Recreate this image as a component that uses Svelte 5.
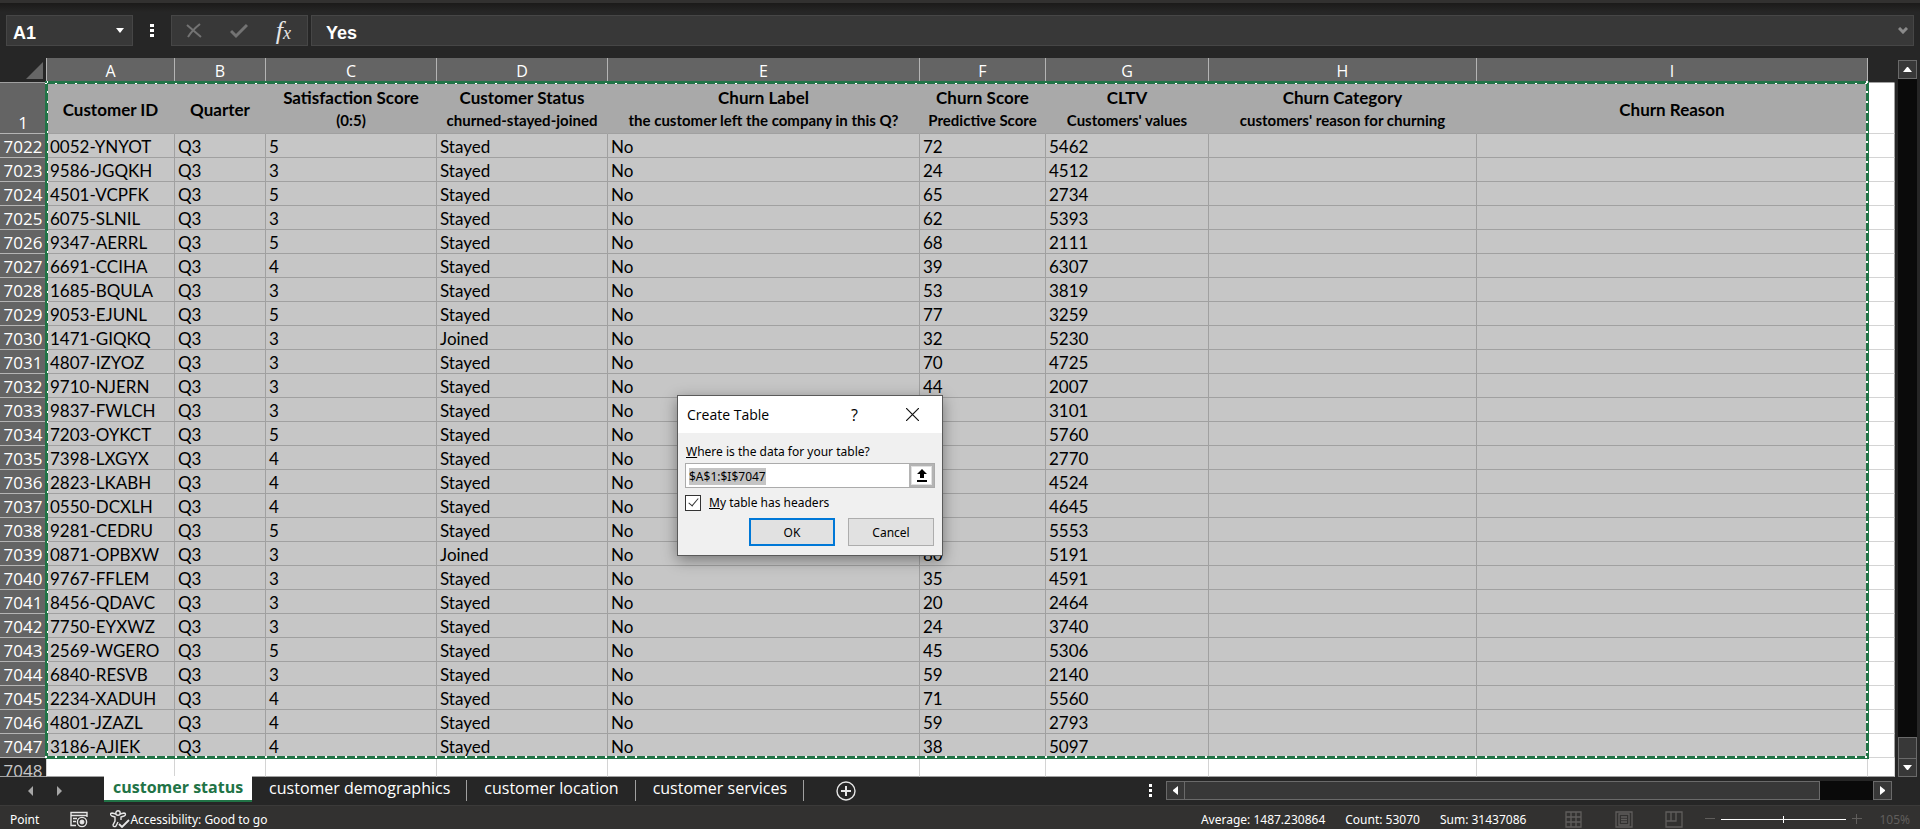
<script>
  import { onMount } from 'svelte';

  let range = '$A$1:$I$7047';
  let hasHeaders = true;
  let zoom = 50;
  let rangeInput;

  const columns = [
    { letter: 'A', title: 'Customer ID' },
    { letter: 'B', title: 'Quarter' },
    { letter: 'C', title: 'Satisfaction Score', note: '(0:5)' },
    { letter: 'D', title: 'Customer Status', note: 'churned-stayed-joined' },
    { letter: 'E', title: 'Churn Label', note: 'the customer left the company in this Q?' },
    { letter: 'F', title: 'Churn Score', note: 'Predictive Score' },
    { letter: 'G', title: 'CLTV', note: "Customers' values" },
    { letter: 'H', title: 'Churn Category', note: "customers' reason for churning" },
    { letter: 'I', title: 'Churn Reason' }
  ];

  const firstRow = 7022;

  // id, satisfaction, status, churn score, cltv
  const customers = [
    ['0052-YNYOT', 5, 'Stayed', 72, 5462],
    ['9586-JGQKH', 3, 'Stayed', 24, 4512],
    ['4501-VCPFK', 5, 'Stayed', 65, 2734],
    ['6075-SLNIL', 3, 'Stayed', 62, 5393],
    ['9347-AERRL', 5, 'Stayed', 68, 2111],
    ['6691-CCIHA', 4, 'Stayed', 39, 6307],
    ['1685-BQULA', 3, 'Stayed', 53, 3819],
    ['9053-EJUNL', 5, 'Stayed', 77, 3259],
    ['1471-GIQKQ', 3, 'Joined', 32, 5230],
    ['4807-IZYOZ', 3, 'Stayed', 70, 4725],
    ['9710-NJERN', 3, 'Stayed', 44, 2007],
    ['9837-FWLCH', 3, 'Stayed', '', 3101],
    ['7203-OYKCT', 5, 'Stayed', '', 5760],
    ['7398-LXGYX', 4, 'Stayed', '', 2770],
    ['2823-LKABH', 4, 'Stayed', '', 4524],
    ['0550-DCXLH', 4, 'Stayed', '', 4645],
    ['9281-CEDRU', 5, 'Stayed', '', 5553],
    ['0871-OPBXW', 3, 'Joined', 80, 5191],
    ['9767-FFLEM', 3, 'Stayed', 35, 4591],
    ['8456-QDAVC', 3, 'Stayed', 20, 2464],
    ['7750-EYXWZ', 3, 'Stayed', 24, 3740],
    ['2569-WGERO', 5, 'Stayed', 45, 5306],
    ['6840-RESVB', 3, 'Stayed', 59, 2140],
    ['2234-XADUH', 4, 'Stayed', 71, 5560],
    ['4801-JZAZL', 4, 'Stayed', 59, 2793],
    ['3186-AJIEK', 4, 'Stayed', 38, 5097]
  ];

  const sheets = ['customer status', 'customer demographics', 'customer location', 'customer services'];
  let activeSheet = sheets[0];

  onMount(() => {
    rangeInput.focus();
    rangeInput.select();
  });
</script>

<div class="excel">
  <div class="ribbon-edge"></div>

  <div class="formula-bar">
    <div class="name-box box">
      <input class="cell-name" aria-label="Name box" value="A1" />
      <button class="plain" aria-label="Open name list">
        <svg width="8" height="5" viewBox="0 0 8 5"><path d="M0 0h8L4 5z" fill="#fff" /></svg>
      </button>
    </div>
    <svg class="grip" width="4" height="14" viewBox="0 0 4 14" fill="#fff">
      <path d="M0 0h4v3H0zM0 5h4v3H0zM0 10h4v3H0z" />
    </svg>
    <div class="tools box">
      <button class="plain" aria-label="Cancel entry">
        <svg width="16" height="16" viewBox="0 0 16 16" fill="none" stroke="#737373" stroke-width="2">
          <path d="M1 2l14 12M14 1C9 5 5 9 2 14" />
        </svg>
      </button>
      <button class="plain" aria-label="Enter">
        <svg width="18" height="16" viewBox="0 0 18 16" fill="none" stroke="#737373" stroke-width="3">
          <path d="M1 8l5 5L17 2" />
        </svg>
      </button>
      <button class="plain fx" aria-label="Insert function"><i>f</i><i class="sub">x</i></button>
    </div>
    <div class="formula box">
      <input class="formula-input" aria-label="Formula bar" value="Yes" />
      <button class="plain" aria-label="Expand formula bar">
        <svg width="10" height="7" viewBox="0 0 10 7" fill="none" stroke="#8a8a8a" stroke-width="3">
          <path d="M1 1l4 4 4-4" />
        </svg>
      </button>
    </div>
  </div>

  <div class="workspace">
    <div class="sheet">
      <table>
        <colgroup>
          <col class="w-num" /><col class="w-a" /><col class="w-b" /><col class="w-c" /><col class="w-d" />
          <col class="w-e" /><col class="w-f" /><col class="w-g" /><col class="w-h" /><col /><col class="w-rest" />
        </colgroup>
        <thead>
          <tr class="letters">
            <td class="corner">
              <svg width="17" height="17" viewBox="0 0 17 17"><path d="M17 0v17H0z" fill="#666" /></svg>
            </td>
            {#each columns as col}
              <th scope="col">{col.letter}</th>
            {/each}
            <td class="off"></td>
          </tr>
          <tr class="titles">
            <th class="num">1</th>
            {#each columns as col}
              <th scope="col">
                <span class="title">{col.title}</span>
                {#if col.note}<span class="note">{col.note}</span>{/if}
              </th>
            {/each}
            <td class="blank"></td>
          </tr>
        </thead>
        <tbody>
          {#each customers as [id, score, status, churn, cltv], i}
            <tr>
              <th class="num" scope="row">{firstRow + i}</th>
              <td>{id}</td>
              <td>Q3</td>
              <td>{score}</td>
              <td>{status}</td>
              <td>No</td>
              <td>{churn}</td>
              <td>{cltv}</td>
              <td></td>
              <td></td>
              <td class="blank"></td>
            </tr>
          {/each}
          <tr class="last">
            <th class="num" scope="row"><div>7048</div></th>
            {#each columns as col}
              <td></td>
            {/each}
            <td class="blank"></td>
          </tr>
        </tbody>
      </table>
      <div class="marquee"></div>
    </div>

    <div class="vscroll">
      <button class="scroll-btn" aria-label="Scroll up">
        <svg width="9" height="5" viewBox="0 0 9 5"><path d="M0 5h9L5 0H4z" fill="#fff" /></svg>
      </button>
      <div class="track"></div>
      <div class="thumb"></div>
      <button class="scroll-btn" aria-label="Scroll down">
        <svg width="9" height="5" viewBox="0 0 9 5"><path d="M0 0h9L5 5H4z" fill="#fff" /></svg>
      </button>
    </div>
  </div>

  <div class="tab-bar">
    <div class="tab-nav">
      <button class="plain" aria-label="Previous sheet">
        <svg width="5" height="10" viewBox="0 0 5 10"><path d="M5 0v10L0 5z" fill="#a6a6a6" /></svg>
      </button>
      <button class="plain" aria-label="Next sheet">
        <svg width="5" height="10" viewBox="0 0 5 10"><path d="M0 0v10l5-5z" fill="#a6a6a6" /></svg>
      </button>
    </div>
    <div class="tabs">
      {#each sheets as sheet}
        <button class="tab" class:active={sheet === activeSheet} on:click={() => (activeSheet = sheet)}>{sheet}</button>
      {/each}
    </div>
    <button class="plain add" aria-label="New sheet">
      <svg width="20" height="20" viewBox="0 0 20 20" fill="none" stroke="#e6e6e6">
        <circle cx="10" cy="10" r="9" stroke-width="1.4" />
        <path d="M10 5v10M5 10h10" stroke-width="2" />
      </svg>
    </button>
    <svg class="tab-grip" width="3" height="13" viewBox="0 0 3 13" fill="#fff">
      <path d="M0 0h3v3H0zM0 5h3v3H0zM0 10h3v3H0z" />
    </svg>
    <div class="hscroll">
      <button class="scroll-btn" aria-label="Scroll left">
        <svg width="5" height="9" viewBox="0 0 5 9"><path d="M5 0v9L0 5V4z" fill="#fff" /></svg>
      </button>
      <div class="thumb"></div>
      <div class="track"></div>
      <button class="scroll-btn" aria-label="Scroll right">
        <svg width="5" height="9" viewBox="0 0 5 9"><path d="M0 0v9l5-4V4z" fill="#fff" /></svg>
      </button>
    </div>
  </div>

  <footer class="status">
    <span class="mode">Point</span>
    <button class="plain macro" aria-label="Record macro">
      <svg width="18" height="17" viewBox="0 0 18 17" fill="none" stroke="#e6e6e6">
        <path d="M6 14.5H1v-13h16V6M1 4.5h16M3 7.5h4M3 10.5h3" stroke-width="1.4" />
        <circle cx="12" cy="11" r="4.6" stroke-width="1.4" />
        <circle cx="12" cy="11" r="2" fill="#e6e6e6" />
      </svg>
    </button>
    <button class="plain access">
      <svg width="20" height="18" viewBox="0 0 20 18" fill="none" stroke="#e6e6e6" stroke-width="1.4">
        <circle cx="8" cy="3" r="2.2" />
        <path d="M6 4L2 3C0 3 0 5 2 6l3 1v4l-2 4c0 2 2 2 3 1l2-4M10 4l4-1c2 0 2 2 0 3l-3 1v3" />
        <path d="M9 14l3 3 7-7" stroke-width="1.8" />
      </svg>
      Accessibility: Good to go
    </button>
    <div class="sums">
      <span>Average: 1487.230864</span>
      <span>Count: 53070</span>
      <span>Sum: 31437086</span>
    </div>
    <div class="views">
      <button class="plain" aria-label="Normal view">
        <svg width="18" height="17" viewBox="0 0 18 17" fill="none" stroke="#605e5c" stroke-width="1.3">
          <path d="M1 1h15v15H1zM1 6h15M1 11h15M6 1v15M11 1v15" />
        </svg>
      </button>
      <button class="plain" aria-label="Page layout">
        <svg width="18" height="17" viewBox="0 0 18 17" fill="none" stroke="#605e5c" stroke-width="1.3">
          <path d="M1 1h16v15H1zM4 3h10v11H4zM6 6h6M6 8.500h6M6 11h6" />
        </svg>
      </button>
      <button class="plain" aria-label="Page break preview">
        <svg width="18" height="17" viewBox="0 0 18 17" fill="none" stroke="#605e5c" stroke-width="1.3">
          <path d="M1 1h16v15H1zM1 10h10V1M6 1v9" />
        </svg>
      </button>
    </div>
    <div class="zoom">
      <button class="plain" aria-label="Zoom out">
        <svg width="10" height="10" viewBox="0 0 10 10" stroke="#605e5c"><path d="M0 4.5h10" /></svg>
      </button>
      <input type="range" aria-label="Zoom" bind:value={zoom} />
      <button class="plain" aria-label="Zoom in">
        <svg width="10" height="10" viewBox="0 0 10 10" stroke="#605e5c"><path d="M0 4.5h10M4.500 0v10" /></svg>
      </button>
    </div>
    <span class="percent">105%</span>
  </footer>

  <div class="dialog" role="dialog" aria-labelledby="dialog-title">
    <div class="dialog-head">
      <span id="dialog-title">Create Table</span>
      <button class="plain help" aria-label="Help">?</button>
      <button class="plain close" aria-label="Close">
        <svg width="13" height="13" viewBox="0 0 13 13" stroke="#111" stroke-width="1.2"><path d="M0 0l13 13M13 0L0 13" /></svg>
      </button>
    </div>
    <div class="dialog-body">
      <label for="range"><u>W</u>here is the data for your table?</label>
      <div class="range">
        <input id="range" bind:this={rangeInput} bind:value={range} />
        <button aria-label="Collapse dialog">
          <svg width="10" height="13" viewBox="0 0 10 13"><path d="M5 0l5 5H7v4H3V5H0zM0 11h10v2H0z" /></svg>
        </button>
      </div>
      <label class="check">
        <input type="checkbox" bind:checked={hasHeaders} />
        <span><u>M</u>y table has headers</span>
      </label>
      <div class="actions">
        <button class="ok">OK</button>
        <button>Cancel</button>
      </div>
    </div>
  </div>
</div>

<style>
  :global(body) {
    background: #262626;
  }

  .excel {
    position: relative;
    font-family: "Noto Sans", "Open Sans", sans-serif;
    font-size: 12px;
    color: #fff;
    background: #262626;
    overflow: hidden;
  }

  .excel :global(svg) {
    display: block;
    flex: none;
  }

  button,
  input {
    font: inherit;
    color: inherit;
    box-sizing: border-box;
    margin: 0;
    border-radius: 0;
  }

  .plain {
    display: flex;
    align-items: center;
    justify-content: center;
    padding: 0;
    border: 0;
    background: none;
  }

  .ribbon-edge {
    height: 12px;
    border-top: 3px solid #323130;
    box-sizing: border-box;
    background: linear-gradient(#1b1a19, #262626);
  }

  /* formula bar */
  .formula-bar {
    display: flex;
    align-items: center;
    padding: 3px 6px 12px;
  }

  .box {
    display: flex;
    align-items: center;
    box-sizing: border-box;
    height: 31px;
    border: 1px solid #464646;
    background: #383838;
  }

  .box input {
    flex: 1;
    min-width: 0;
    height: 28px;
    border: 0;
    padding: 5px 0 0;
    background: none;
    outline: none;
    font-family: "Liberation Sans Narrow", "Liberation Sans", sans-serif;
    font-size: 18px;
    font-weight: 700;
  }

  .name-box {
    width: 127px;
    padding: 0 8px 0 6px;
  }

  .grip {
    margin: 0 17px;
  }

  .tools {
    width: 137px;
    margin-right: 3px;
    padding: 0 16px 0 14px;
    justify-content: space-between;
  }

  .fx {
    font-family: "Liberation Serif", serif;
    font-size: 26px;
    line-height: 28px;
    color: #e6e6e6;
  }

  .fx .sub {
    font-size: 18px;
    padding-top: 4px;
  }

  .formula {
    flex: 1;
    padding: 0 5px 0 14px;
  }

  /* grid */
  .workspace {
    display: flex;
  }

  .sheet {
    position: relative;
    flex: 1;
  }

  table {
    width: 100%;
    table-layout: fixed;
    border-collapse: separate;
    border-spacing: 0;
    font-family: Lato, "Open Sans", sans-serif;
    font-size: 17px;
    line-height: 21px;
    color: #000;
  }

  .w-num { width: 47px; }
  .w-a { width: 128px; }
  .w-b { width: 91px; }
  .w-c, .w-d { width: 171px; }
  .w-e { width: 312px; }
  .w-f { width: 126px; }
  .w-g { width: 163px; }
  .w-h { width: 268px; }
  .w-rest { width: 27px; }

  th,
  td {
    box-sizing: border-box;
    height: 24px;
    padding: 2px 3px 0;
    border-right: 1px solid #a0a0a0;
    border-bottom: 1px solid #a0a0a0;
    background: #c6c6c6;
    text-align: left;
    white-space: nowrap;
  }

  .letters th,
  .letters td {
    border-right-color: #b4b4b4;
    background: #646464;
    color: #fff;
    font-family: "Open Sans", sans-serif;
    font-size: 16px;
    font-weight: 400;
    text-align: center;
  }

  .letters th {
    height: 25px;
  }

  .letters .corner {
    padding: 0 3px;
    background: #262626;
  }

  .corner svg {
    margin-left: auto;
  }

  .letters .off {
    border-right-color: #262626;
    background: #262626;
  }

  .titles th {
    height: 51px;
    border-right-color: #a9a9a9;
    background: #a9a9a9;
    font-weight: 700;
    line-height: 23px;
    text-align: center;
  }

  .title,
  .note {
    display: block;
  }

  .note {
    font-size: 15px;
  }

  .num,
  .titles .num {
    padding: 2px 0 0;
    border-right-color: #b4b4b4;
    border-bottom-color: #b4b4b4;
    background: #646464;
    color: #fff;
    font-family: "Open Sans", sans-serif;
    font-size: 17px;
    font-weight: 400;
    line-height: 21px;
    text-align: center;
  }

  .titles .num {
    vertical-align: bottom;
  }

  td.blank {
    background: #fff;
    border-bottom-color: #d4d4d4;
  }

  .last td,
  .last th {
    height: 19px;
    padding: 0;
    border-right-color: #d4d4d4;
    border-bottom-color: #a0a0a0;
    background: #fff;
  }

  .last th {
    background: #262626;
    color: #c8c8c8;
  }

  .last div {
    height: 18px;
    overflow: hidden;
    line-height: 25px;
  }

  /* dashed copy outline round the selected range */
  .marquee {
    position: absolute;
    top: 23px;
    right: 26px;
    bottom: 18px;
    left: 45px;
    pointer-events: none;
    background:
      repeating-linear-gradient(90deg, #fff 0 2px, transparent 2px 10px) 0 2px / 100% 1px no-repeat,
      repeating-linear-gradient(90deg, #fff 0 2px, transparent 2px 10px) 0 calc(100% - 1px) / 100% 2px no-repeat,
      repeating-linear-gradient(#fff 0 2px, transparent 2px 10px) 2px 0 / 1px 100% no-repeat,
      repeating-linear-gradient(#fff 0 2px, transparent 2px 10px) calc(100% - 1px) 0 / 2px 100% no-repeat,
      linear-gradient(#217346, #217346) 0 0 / 100% 3px no-repeat,
      linear-gradient(#217346, #217346) 0 100% / 100% 3px no-repeat,
      linear-gradient(#217346, #217346) 0 0 / 3px 100% no-repeat,
      linear-gradient(#217346, #217346) 100% 0 / 3px 100% no-repeat;
  }

  /* scroll bars */
  .vscroll {
    display: flex;
    flex-direction: column;
    width: 19px;
    padding: 2px 3px 0;
  }

  .scroll-btn,
  .thumb {
    box-sizing: border-box;
    border: 1px solid #6a6a6a;
    background: #383838;
  }

  .scroll-btn {
    display: flex;
    align-items: center;
    justify-content: center;
    flex: none;
    width: 19px;
    height: 19px;
    padding: 0;
  }

  .vscroll .track {
    flex: 1;
    background: #0a0a0a;
  }

  .vscroll .thumb {
    height: 22px;
    margin-bottom: -1px;
  }

  .hscroll {
    display: flex;
    width: calc(38% - 4px);
    margin: 4px 28px 0 14px;
    height: 19px;
  }

  .hscroll .thumb {
    flex: 1;
    margin-left: -1px;
  }

  .hscroll .track {
    width: 53px;
    background: #0a0a0a;
  }

  /* sheet tabs */
  .tab-bar {
    display: flex;
    height: 28px;
  }

  .tab-nav {
    display: flex;
    gap: 24px;
    width: 76px;
    padding-left: 28px;
  }

  .tabs {
    display: flex;
  }

  .tab {
    position: relative;
    height: 25px;
    padding: 0 17px 4px;
    border: 0;
    background: none;
    font-family: "Open Sans", sans-serif;
    font-size: 16px;
    line-height: 20px;
  }

  .tab:not(.active)::after {
    content: "";
    position: absolute;
    top: 3px;
    right: 0;
    bottom: 1px;
    border-right: 1px solid #a0a0a0;
  }

  .tab.active {
    margin-top: -1px;
    height: 26px;
    padding: 0 9px 3px;
    border-bottom: 2px solid #217346;
    background: #fff;
    color: #217346;
    font-weight: 700;
  }

  .add {
    margin: 4px 0 0 32px;
    height: 20px;
  }

  .tab-grip {
    margin: 7px 0 0 auto;
  }

  /* status bar */
  .status {
    display: flex;
    align-items: center;
    box-sizing: border-box;
    height: 25px;
    padding: 2px 10px 0;
    border-top: 1px solid #3b3a39;
    background: #323130;
    white-space: nowrap;
  }

  .macro {
    margin: 0 22px 0 31px;
  }

  .sums {
    display: flex;
    gap: 20px;
    margin-left: auto;
  }

  .views {
    display: flex;
    gap: 32px;
    margin: 0 22px 0 39px;
  }

  .zoom {
    display: flex;
    align-items: center;
    gap: 6px;
  }

  .zoom input {
    width: 125px;
    height: 10px;
    appearance: none;
    background: linear-gradient(#fff, #fff) 0 50% / 100% 1px no-repeat;
  }

  .zoom input::-webkit-slider-thumb {
    appearance: none;
    width: 1px;
    height: 7px;
    background: #fff;
  }

  .percent {
    margin-left: 17px;
    color: #605e5c;
  }

  /* create table dialog */
  .dialog {
    position: absolute;
    top: 395px;
    left: 677px;
    width: 266px;
    box-sizing: border-box;
    border: 1px solid #5a5a5a;
    background: #f0f0f0;
    box-shadow: 0 4px 14px rgba(0, 0, 0, 0.4);
    color: #000;
  }

  .dialog-head {
    display: flex;
    align-items: center;
    height: 37px;
    padding: 0 23px 0 9px;
    background: #fff;
    font-family: "Open Sans", sans-serif;
    font-size: 14px;
  }

  .help {
    margin: 0 48px 0 auto;
    font-size: 16px;
  }

  .dialog-body {
    padding: 10px 8px 9px;
  }

  .dialog-body label {
    display: block;
    line-height: 18px;
  }

  .range {
    display: flex;
    height: 25px;
    margin: 2px -1px 6px;
    box-sizing: border-box;
    border: 1px solid #ababab;
    background: #fff;
  }

  .range input {
    flex: 1;
    min-width: 0;
    padding: 2px 3px 1px;
    border: 0;
    outline: none;
    background: none;
  }

  .range input::selection {
    background: #c4c4c4;
    color: #000;
  }

  .range button {
    display: flex;
    align-items: center;
    justify-content: center;
    width: 25px;
    padding: 0;
    border: 2px solid #b4b4b4;
    background: #fff;
    box-shadow: inset 0 0 0 1px #e1e1e1;
  }

  .dialog-body .check {
    display: flex;
    align-items: center;
    gap: 8px;
    margin-left: -1px;
  }

  .check input {
    appearance: none;
    width: 16px;
    height: 16px;
    border: 1px solid #333;
    background: #fff;
    display: flex;
    justify-content: center;
  }

  .check input:checked::after {
    content: "";
    width: 4px;
    height: 9px;
    border: solid #333;
    border-width: 0 1px 1px 0;
    transform: rotate(40deg);
  }

  .actions {
    display: flex;
    justify-content: flex-end;
    gap: 13px;
    margin-top: 6px;
  }

  .actions button {
    width: 86px;
    height: 28px;
    padding: 0;
    border: 1px solid #adadad;
    background: #e1e1e1;
  }

  .actions .ok {
    border: 2px solid #0078d7;
  }
</style>
